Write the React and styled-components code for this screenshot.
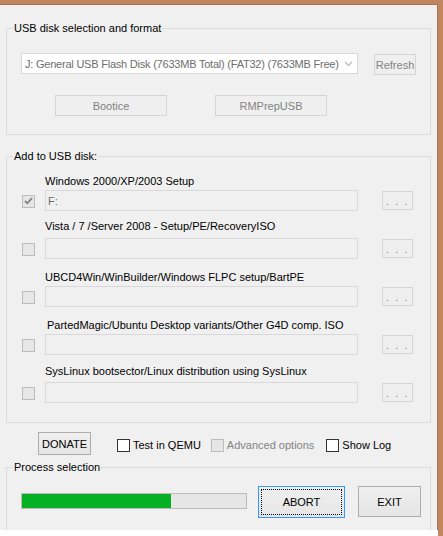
import React from 'react';
import styled, { createGlobalStyle } from 'styled-components';

const GlobalStyle = createGlobalStyle`
	html, body {
		margin:0;
		padding:0;
		background-color:#fff;
	}
	body {
		font-family:"Liberation Sans", Arial, sans-serif;
		font-size:11px;
		color:#000;
	}
	* {
		box-sizing:border-box;
	}
`;

const Desktop = styled.div`
	display:flex;
	flex-direction:column;
	width:443px;
	height:536px;
	padding-top:4px;
	background-color:#c08660;
	overflow:hidden;
`;

const Window = styled.div`
	display:flex;
	flex-direction:column;
	width:438px;
	height:526px;
	padding:0 6px;
	border-top:1px solid #a87352;
	border-right:1px solid #a87352;
	background-color:#f0f0f0;
	overflow:hidden;
`;

const BottomStrip = styled.div`
	width:438px;
	height:6px;
	background-color:#fff;
`;

const Group = styled.fieldset`
	margin:${p => p.$top}px 0 0;
	padding:0;
	min-width:0;
	border:1px solid #dcdcdc;
	flex-shrink:0;
`;

const Legend = styled.legend`
	margin-left:6px;
	padding:0 1px;
	line-height:13px;
	font-size:11px;
	color:#000;
`;

const GroupBody = styled.div`
	padding:${p => p.$pad};
`;

const Row = styled.div`
	display:flex;
	align-items:flex-start;
	margin-top:${p => p.$top || 0}px;
	margin-left:${p => p.$left || 0}px;
`;

const Combo = styled.div`
	display:flex;
	align-items:center;
	justify-content:space-between;
	flex-shrink:0;
	width:337px;
	height:21px;
	padding:0 4px 0 3px;
	border:1px solid #d9d9d9;
	background-color:#fff;
	color:#6d6d6d;
	white-space:nowrap;

	span {
		overflow:hidden;
		letter-spacing:-0.22px;
	}

	svg {
		flex-shrink:0;
	}
`;

const WinButton = styled.div`
	display:flex;
	align-items:center;
	justify-content:center;
	flex-shrink:0;
	position:relative;
	width:${p => p.$w}px;
	height:${p => p.$h}px;
	margin-left:${p => p.$ml || 0}px;
	margin-top:${p => p.$mt || 0}px;
	border:1px solid ${p => (p.$disabled ? '#d5d5d5' : p.$focus ? '#3399ff' : '#adadad')};
	background:${p => (p.$disabled ? '#efefef' : 'linear-gradient(#f0f0f0, #e5e5e5)')};
	color:${p => (p.$disabled ? '#838383' : '#000')};
	letter-spacing:${p => p.$spacing || 0}px;
	white-space:nowrap;

	${p => p.$focus && `
		&::after {
			content:'';
			position:absolute;
			inset:2px;
			border:1px dotted #000;
		}
	`}
`;

const OptionRow = styled.div`
	display:flex;
	flex-direction:column;
	justify-content:flex-end;
	height:48px;
`;

const OptionLabel = styled.div`
	margin-left:${p => 23 + (p.$indent || 0)}px;
	margin-bottom:${p => p.$gap}px;
	line-height:13px;
	white-space:nowrap;
`;

const FieldRow = styled.div`
	display:flex;
	align-items:center;
`;

const Box = styled.div`
	display:flex;
	align-items:center;
	justify-content:center;
	flex-shrink:0;
	width:13px;
	height:13px;
	margin-top:${p => p.$mt || 0}px;
	border:1px solid ${p => (p.$disabled ? '#bcbcbc' : '#333')};
	background-color:${p => (p.$disabled ? '#e6e6e6' : '#fff')};
`;

const TextBox = styled.div`
	display:flex;
	align-items:center;
	flex-shrink:0;
	width:313px;
	height:21px;
	margin-left:10px;
	padding-left:2px;
	border:1px solid #d9d9d9;
	background-color:#f0f0f0;
	color:#6d6d6d;
`;

const Controls = styled.div`
	display:flex;
	align-items:center;
	margin-top:9px;
	padding-left:32px;
	flex-shrink:0;
`;

const CheckItem = styled.label`
	display:flex;
	align-items:center;
	margin-left:${p => p.$ml}px;
	margin-top:4px;
	color:${p => (p.$disabled ? '#838383' : '#000')};
	line-height:13px;
	white-space:nowrap;
`;

const CheckText = styled.span`
	margin-left:3px;
`;

const Progress = styled.div`
	flex-shrink:0;
	width:226px;
	height:16px;
	margin-top:7px;
	border:1px solid #bcbcbc;
	background-color:#e6e6e6;
`;

const ProgressFill = styled.div`
	height:100%;
	background-color:#06b025;
`;

const Chevron = () => (
	<svg width="9" height="6" viewBox="0 0 9 6">
		<path d="M1 1 L4.5 4.5 L8 1" fill="none" stroke="#b8b8b8" strokeWidth="1.2" />
	</svg>
);

const Check = () => (
	<svg width="9" height="8" viewBox="0 0 9 8">
		<path d="M1 4 L3.3 6.3 L8 1.2" fill="none" stroke="#858585" strokeWidth="1.8" />
	</svg>
);

const options = [
	{ label: 'Windows 2000/XP/2003 Setup', gap: 2, checked: true, value: 'F:' },
	{ label: 'Vista / 7 /Server 2008 - Setup/PE/RecoveryISO', gap: 5 },
	{ label: 'UBCD4Win/WinBuilder/Windows FLPC setup/BartPE', gap: 2 },
	{ label: 'PartedMagic/Ubuntu Desktop variants/Other G4D comp. ISO', gap: 2, indent: 2 },
	{ label: 'SysLinux bootsector/Linux distribution using SysLinux', gap: 4 }
];

const App = () => {
	const progress = 66.5;

	return (
		<>
			<GlobalStyle />
			<Desktop>
				<Window>
					<Group $top={17}>
						<Legend>USB disk selection and format</Legend>
						<GroupBody $pad="18px 14px 18px 14px">
							<Row>
								<Combo>
									<span>J: General USB Flash Disk (7633MB Total) (FAT32) (7633MB Free)</span>
									<Chevron />
								</Combo>
								<WinButton $disabled $w={42} $h={21} $ml={16} $mt={1}>Refresh</WinButton>
							</Row>
							<Row $top={20} $left={34}>
								<WinButton $disabled $w={112} $h={21}>Bootice</WinButton>
								<WinButton $disabled $w={112} $h={21} $ml={48}>RMPrepUSB</WinButton>
							</Row>
						</GroupBody>
					</Group>

					<Group $top={15}>
						<Legend>Add to USB disk:</Legend>
						<GroupBody $pad="0 14px 19px 15px">
							{options.map((opt, idx) => (
								<OptionRow key={idx}>
									<OptionLabel $gap={opt.gap} $indent={opt.indent}>{opt.label}</OptionLabel>
									<FieldRow>
										<Box $disabled $mt={1}>{opt.checked && <Check />}</Box>
										<TextBox>{opt.value}</TextBox>
										<WinButton $disabled $w={31} $h={19} $ml={24} $spacing={1.5}>. . .</WinButton>
									</FieldRow>
								</OptionRow>
							))}
						</GroupBody>
					</Group>

					<Controls>
						<WinButton $w={53} $h={23}>DONATE</WinButton>
						<CheckItem $ml={26}>
							<Box />
							<CheckText>Test in QEMU</CheckText>
						</CheckItem>
						<CheckItem $ml={10} $disabled>
							<Box $disabled />
							<CheckText>Advanced options</CheckText>
						</CheckItem>
						<CheckItem $ml={12}>
							<Box />
							<CheckText>Show Log</CheckText>
						</CheckItem>
					</Controls>

					<Group $top={6}>
						<Legend>Process selection</Legend>
						<GroupBody $pad="12px 0 40px 14px">
							<Row>
								<Progress>
									<ProgressFill style={{ width: `${progress}%` }} />
								</Progress>
								<WinButton $focus $w={87} $h={32} $ml={11}>ABORT</WinButton>
								<WinButton $w={63} $h={31} $ml={13}>EXIT</WinButton>
							</Row>
						</GroupBody>
					</Group>
				</Window>
				<BottomStrip />
			</Desktop>
		</>
	);
};

export default App;
